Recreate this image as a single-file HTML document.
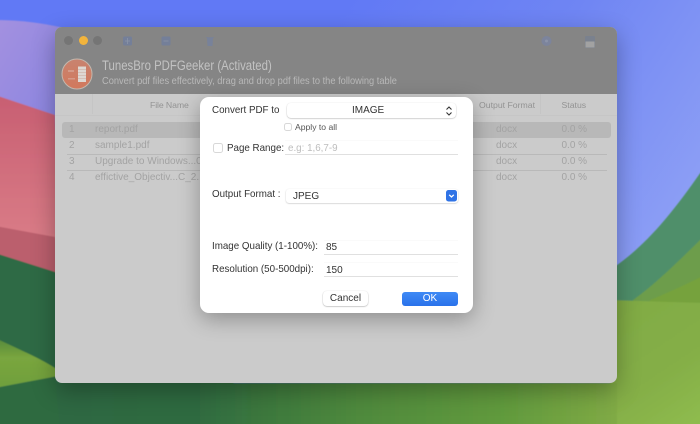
<!DOCTYPE html>
<html><head><meta charset="utf-8"><style>
html,body{margin:0;padding:0;width:700px;height:424px;overflow:hidden;font-family:"Liberation Sans",sans-serif}
#wrap{position:relative;width:700px;height:424px;overflow:hidden;filter:blur(.35px)}
.a{position:absolute;white-space:nowrap}
.win{position:absolute;left:55px;top:27px;width:562px;height:356px;border-radius:7px;overflow:hidden;background:#cbcbcb;box-shadow:0 8px 24px rgba(0,0,0,.3)}
.tb{position:absolute;left:0;top:0;width:562px;height:67px;background:#858585}
.hd{font-size:8.7px;color:#939393}
.rw{font-size:10px;color:#a3a3a3}
.ln{position:absolute;height:1px;background:#b9b9b9}
.dlg{position:absolute;left:200px;top:97px;width:273px;height:216px;background:#fff;border-radius:9px;box-shadow:0 6px 22px rgba(0,0,0,.3)}
.lb{font-size:10.2px;color:#333;transform:scaleX(.96);transform-origin:0 0}
.fld{position:absolute;background:#fff;border-bottom:1px solid #e0e0e0;border-top:1px solid #fafafa;box-sizing:border-box}
.cb{position:absolute;background:#fff;border:1px solid #d8d8d8;border-radius:2.5px;box-sizing:border-box}
</style></head><body><div id="wrap">
<svg class="a" style="left:0;top:0" width="700" height="424" viewBox="0 0 700 424">
<defs>
<linearGradient id="sky" gradientUnits="userSpaceOnUse" x1="350" y1="0" x2="680" y2="210"><stop offset="0" stop-color="#6179f5"/><stop offset=".5" stop-color="#6f85f3"/><stop offset="1" stop-color="#8c9ef5"/></linearGradient>
<linearGradient id="lil" x1="0" y1="0" x2="1" y2="1"><stop offset="0" stop-color="#a491e0"/><stop offset="1" stop-color="#8a85e0"/></linearGradient>
<linearGradient id="pk" x1="0" y1="0" x2="0" y2="1"><stop offset="0" stop-color="#c85f72"/><stop offset="1" stop-color="#dc808a"/></linearGradient>
<linearGradient id="gr" gradientUnits="userSpaceOnUse" x1="55" y1="0" x2="700" y2="0"><stop offset="0" stop-color="#2d6843"/><stop offset=".22" stop-color="#2f6b40"/><stop offset=".47" stop-color="#4f8a3c"/><stop offset=".7" stop-color="#629b3e"/><stop offset=".87" stop-color="#80aa45"/><stop offset="1" stop-color="#8cb54b"/></linearGradient>
<linearGradient id="lm" gradientUnits="userSpaceOnUse" x1="617" y1="300" x2="700" y2="424"><stop offset="0" stop-color="#81ab45"/><stop offset=".6" stop-color="#85af47"/><stop offset="1" stop-color="#8fbc4f"/></linearGradient>
<linearGradient id="ll" x1="0" y1="0" x2="0" y2="1"><stop offset="0" stop-color="#55893c"/><stop offset=".4" stop-color="#7aa63f"/><stop offset="1" stop-color="#6f9f3c"/></linearGradient>
<filter id="s" x="-5%" y="-5%" width="110%" height="110%"><feGaussianBlur stdDeviation=".6"/></filter>
</defs>
<rect width="700" height="424" fill="url(#sky)"/>
<g filter="url(#s)">
<path d="M-5 20C20 20 40 23 60 27L60 125L-5 97Z" fill="url(#lil)"/>
<path d="M-5 95L55 115L60 260L-5 260Z" fill="url(#pk)"/>
<path d="M-5 226L55 237L60 275L-5 258Z" fill="#bb5f6d"/>
<path d="M-5 253L55 272L300 424L-5 424Z" fill="#2f6a45"/>
<path d="M-5 338C20 350 40 358 58 370L58 376L-5 388Z" fill="url(#ll)"/>
<path d="M610 270C640 250 667 222 705 166V310H610Z" fill="#4f8f6b"/>
<path d="M633 300C650 288 670 270 705 235V310H633Z" fill="#6d9d4c"/>
<path d="M650 300C665 294 680 287 705 275V310H650Z" fill="#76a23c"/>
<path d="M610 300C640 301 670 302 705 303V430H610Z" fill="url(#lm)"/>
<path d="M55 383H617V430H-5V388Z" fill="url(#gr)"/>
<path d="M-5 389L55 377L60 430H-5Z" fill="#2e6a41"/>
</g>
</svg>

<div class="win">
<div class="tb"></div>
<div class="a" style="left:9px;top:9px;width:9px;height:9px;border-radius:50%;background:#757575"></div>
<div class="a" style="left:23.5px;top:9px;width:9px;height:9px;border-radius:50%;background:#f2b43c"></div>
<div class="a" style="left:38px;top:9px;width:9px;height:9px;border-radius:50%;background:#757575"></div>
<svg class="a" style="left:0;top:0" width="562" height="67" viewBox="0 0 562 67">
<rect x="68" y="9.500" width="9" height="9" rx="1.500" fill="#747f99"/><path d="M72.500 11v6M70 14h5" stroke="#8c95a8" stroke-width=".8"/>
<rect x="106.500" y="9.500" width="9" height="9" rx="1.500" fill="#747f99"/><path d="M108.500 14h5" stroke="#8c95a8" stroke-width=".8"/>
<path d="M152 11h6l-.5 8h-5z" fill="#78829a"/><path d="M151 10.500h8" stroke="#78829a" stroke-width=".8"/>
<circle cx="491.500" cy="14" r="5" fill="#7c849c"/><circle cx="491.500" cy="14" r="1.500" fill="#8b93a8"/>
<rect x="530" y="9" width="10" height="12" rx="1.500" fill="#7a818e"/><rect x="530.500" y="14.500" width="9" height="6" fill="#a2a2a2"/>
<defs><linearGradient id="lg" x1="0" y1="0" x2="0" y2="1"><stop offset="0" stop-color="#c8836f"/><stop offset="1" stop-color="#d2785c"/></linearGradient></defs>
<circle cx="22" cy="47" r="15" fill="url(#lg)" stroke="#c3b8ae" stroke-width="1"/>
<rect x="23" y="39.500" width="8" height="15.500" fill="#ded8d2"/><path d="M23 42.500h8M23 45.500h8M23 48.500h8M23 51.500h8" stroke="#c9a89c" stroke-width=".6"/>
<rect x="13" y="43" width="6" height="2" fill="#d59a88"/><rect x="13" y="51" width="7" height="1.500" fill="#d59a88"/>
</svg>
<div class="a" style="left:47px;top:30.500px;font-size:13.400px;color:#c2c2c2;transform:scaleX(.85);transform-origin:0 0">TunesBro PDFGeeker (Activated)</div>
<div class="a" style="left:46.500px;top:49px;font-size:10.100px;color:#b9b9b9;transform:scaleX(.92);transform-origin:0 0">Convert pdf files effectively, drag and drop pdf files to the following table</div>

<div class="a" style="left:37px;top:67px;width:1px;height:20px;background:#c5c5c5"></div>
<div class="a" style="left:0;top:88px;width:562px;height:1px;background:#c6c6c6"></div>
<div class="a hd" style="left:95px;top:72.500px;letter-spacing:-.1px">File Name</div>
<div class="a hd" style="left:424px;top:72.500px">Output Format</div>
<div class="a" style="left:485px;top:67px;width:1px;height:20px;background:#c5c5c5"></div>
<div class="a hd" style="left:506.500px;top:72.500px">Status</div>

<div class="a" style="left:7px;top:95px;width:549px;height:16px;border-radius:3px;background:#b8b8b8"></div>
<div class="ln" style="left:12px;top:126.500px;width:540px"></div>
<div class="ln" style="left:12px;top:142.500px;width:540px"></div>
<div class="a rw" style="left:14px;top:96.500px">1</div><div class="a rw" style="left:40px;top:96.500px">report.pdf</div>
<div class="a rw" style="left:14px;top:112.500px">2</div><div class="a rw" style="left:40px;top:112.500px">sample1.pdf</div>
<div class="a rw" style="left:14px;top:128.500px">3</div><div class="a rw" style="left:40px;top:128.500px">Upgrade to Windows...0</div>
<div class="a rw" style="left:14px;top:144.500px">4</div><div class="a rw" style="left:40px;top:144.500px">effictive_Objectiv...C_2.</div>
<div class="a rw" style="left:441px;top:96.500px">docx</div><div class="a rw" style="left:506.500px;top:96.500px">0.0 %</div>
<div class="a rw" style="left:441px;top:112.500px">docx</div><div class="a rw" style="left:506.500px;top:112.500px">0.0 %</div>
<div class="a rw" style="left:441px;top:128.500px">docx</div><div class="a rw" style="left:506.500px;top:128.500px">0.0 %</div>
<div class="a rw" style="left:441px;top:144.500px">docx</div><div class="a rw" style="left:506.500px;top:144.500px">0.0 %</div>
</div>

<div class="dlg"></div>
<div class="a lb" style="left:212px;top:105px">Convert PDF to</div>
<div class="a" style="left:286.500px;top:103px;width:169px;height:15px;background:#fff;border-radius:4px;box-shadow:0 .5px 1.500px rgba(0,0,0,.3)"></div>
<div class="a" style="left:352px;top:105px;font-size:10px;color:#333">IMAGE</div>
<svg class="a" style="left:445px;top:105px" width="8" height="12" viewBox="0 0 8 12"><path d="M1.500 4.500L4 2l2.500 2.500M1.500 7.500L4 10l2.500-2.500" fill="none" stroke="#333" stroke-width="1.100"/></svg>
<div class="cb" style="left:283.500px;top:122.500px;width:8px;height:8px"></div>
<div class="a" style="left:295px;top:122px;font-size:8.600px;color:#555">Apply to all</div>
<div class="cb" style="left:212.500px;top:143px;width:10px;height:10px"></div>
<div class="a lb" style="left:227px;top:142.500px">Page Range:</div>
<div class="fld" style="left:285px;top:140px;width:173px;height:15px"></div>
<div class="a" style="left:288px;top:142.500px;font-size:9.800px;color:#bdbdbd">e.g: 1,6,7-9</div>

<div class="a lb" style="left:212px;top:189px">Output Format :</div>
<div class="a" style="left:286px;top:189px;width:172px;height:14px;background:#fff;border-radius:3px;box-shadow:0 .5px 1.500px rgba(0,0,0,.25)"></div>
<div class="a" style="left:293px;top:191px;font-size:10px;color:#333">JPEG</div>
<svg class="a" style="left:445.500px;top:190px" width="12" height="12" viewBox="0 0 12 12"><rect width="11" height="11.500" rx="2.500" fill="#2f73e6"/><path d="M3.200 4.800L5.500 7l2.300-2.200" fill="none" stroke="#fff" stroke-width="1.300"/></svg>

<div class="a lb" style="left:212px;top:241px">Image Quality (1-100%):</div>
<div class="fld" style="left:324px;top:239.500px;width:134px;height:15px"></div>
<div class="a" style="left:326px;top:242px;font-size:10px;color:#333">85</div>
<div class="a lb" style="left:212px;top:263.500px">Resolution (50-500dpi):</div>
<div class="fld" style="left:324px;top:262px;width:134px;height:15px"></div>
<div class="a" style="left:326px;top:264.500px;font-size:10px;color:#333">150</div>

<div class="a" style="left:323px;top:291px;width:45px;height:15px;background:#fff;border-radius:4px;box-shadow:0 .5px 1.500px rgba(0,0,0,.35);text-align:center;font-size:10px;line-height:15px;color:#333">Cancel</div>
<div class="a" style="left:402px;top:292px;width:56px;height:14px;background:linear-gradient(#3f8af5,#2a72ea);border-radius:3px;text-align:center;font-size:10px;line-height:13.500px;color:#fff">OK</div>
</div></body></html>
